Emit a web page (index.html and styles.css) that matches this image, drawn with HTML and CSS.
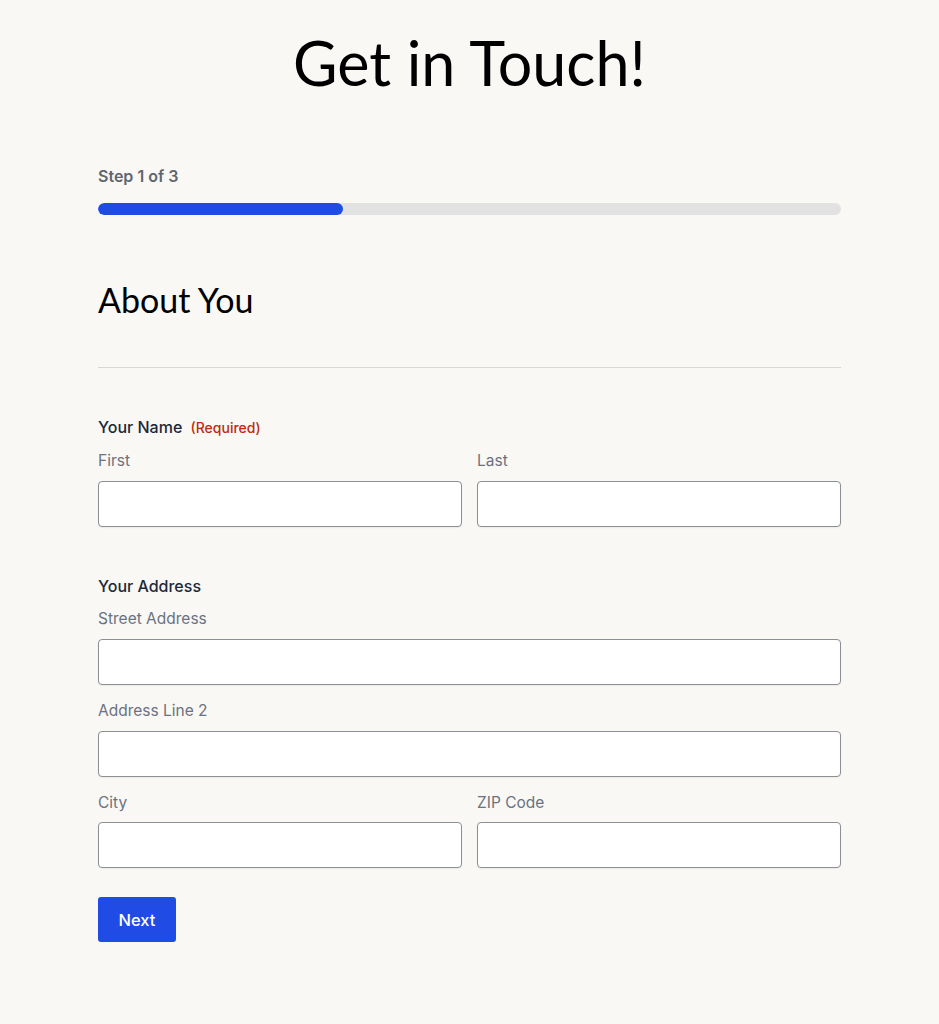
FILE: index.html
```html
<!DOCTYPE html>
<html>
<head>
<meta charset="utf-8">
<link rel="stylesheet" href="styles.css">
</head>
<body>
<main class="page">
  <h1 class="title">Get in Touch!</h1>
  <div class="steps">
    <div class="step-label">Step 1 of 3</div>
    <div class="progress"><div class="progress-fill" style="width:33%"></div></div>
  </div>
  <h2 class="section">About You</h2>
  <hr class="divider">
  <div class="field field-name">
    <div class="legend">Your Name <span class="req">(Required)</span></div>
    <div class="row">
      <div class="col"><label class="sub">First</label><div class="input"></div></div>
      <div class="col"><label class="sub">Last</label><div class="input"></div></div>
    </div>
  </div>
  <div class="field field-address">
    <div class="legend">Your Address</div>
    <div class="col"><label class="sub">Street Address</label><div class="input"></div></div>
    <div class="col later"><label class="sub">Address Line 2</label><div class="input"></div></div>
    <div class="row later">
      <div class="col"><label class="sub">City</label><div class="input"></div></div>
      <div class="col"><label class="sub">ZIP Code</label><div class="input"></div></div>
    </div>
  </div>
  <button class="next">Next</button>
</main>
</body>
</html>
```
FILE: styles.css
```css
html, body { margin: 0; padding: 0; }
body {
  background: #f9f8f5;
  font-family: Inter, "Noto Sans", sans-serif;
  color: #1d2939;
}
.page {
  width: 743px;
  margin: 0 auto;
  padding: 25px 0 60px;
  display: flex;
  flex-direction: column;
}
.title {
  margin: 0;
  text-align: center;
  font-family: Lato, "Noto Sans", sans-serif;
  font-weight: 400;
  font-size: 61px;
  line-height: 76px;
  color: #000;
}
.steps { margin-top: 65px; }
.step-label {
  font-size: 16px;
  font-weight: 600;
  color: #5f6670;
  line-height: 20px;
  letter-spacing: 0;
}
.progress {
  margin-top: 17px;
  height: 12px;
  background: #e2e2e2;
  border-radius: 6px;
  overflow: hidden;
}
.progress-fill {
  height: 100%;
  background: #1f4de2;
  border-radius: 6px;
}
.section {
  margin: 64px 0 0;
  font-family: Lato, "Noto Sans", sans-serif;
  font-weight: 400;
  font-size: 34px;
  line-height: 42px;
  color: #000;
}
.divider {
  margin: 46px 0 0;
  border: 0;
  border-top: 1px solid #d8d7d3;
}
.field { display: flex; flex-direction: column; }
.field-name { margin-top: 48px; }
.field-address { margin-top: 48px; }
.legend {
  font-size: 16px;
  font-weight: 500;
  line-height: 22px;
  color: #1d2939;
}
.req {
  font-size: 14px;
  font-weight: 500;
  color: #c02b0a;
  margin-left: 4px;
}
.row {
  display: grid;
  grid-template-columns: 1fr 1fr;
  gap: 15px;
}
.col { display: flex; flex-direction: column; }
.sub {
  margin-top: 12px;
  font-size: 15.5px;
  line-height: 20px;
  color: #6b7280;
}
.later .sub { margin-top: 16px; }
.input {
  margin-top: 10px;
  height: 44px;
  background: #fff;
  border: 1px solid #8c8f94;
  border-radius: 4px;
  box-shadow: 0 1px 2px rgba(0,0,0,0.06);
}
.row.later .input { margin-top: 9px; }
.next {
  margin-top: 29px;
  align-self: flex-start;
  width: 78px;
  height: 45px;
  background: #204ce5;
  color: #fff;
  border: 0;
  border-radius: 3px;
  font-family: Inter, "Noto Sans", sans-serif;
  font-size: 16.5px;
  font-weight: 500;
}
```
